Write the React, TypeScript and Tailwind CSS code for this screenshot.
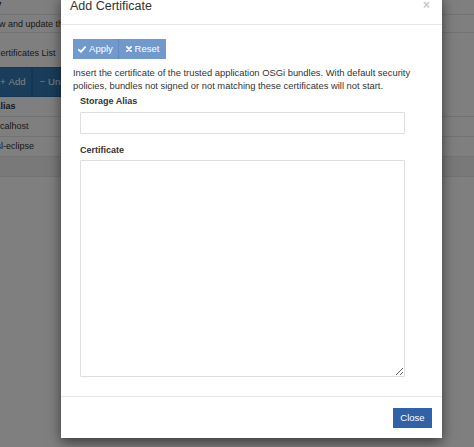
import React from 'react';

const font = "font-['Liberation_Sans',Arial,Helvetica,sans-serif]";

function CheckIcon() {
  return (
    <svg width="8" height="7" viewBox="0 0 14 12" className="shrink-0">
      <path d="M1.5 6.5 L5 10 L12.5 2" fill="none" stroke="white" strokeWidth="3.2" strokeLinecap="round" strokeLinejoin="round" />
    </svg>
  );
}

function XIcon() {
  return (
    <svg width="6" height="6" viewBox="0 0 10 10" className="shrink-0">
      <path d="M1.5 1.5 L8.5 8.5 M8.5 1.5 L1.5 8.5" fill="none" stroke="white" strokeWidth="2.8" strokeLinecap="round" />
    </svg>
  );
}

// page that sits behind the dialog
function BackgroundPage() {
  return (
    <div className="flex flex-col text-[#333]">
      <div className="h-[15px] border-b border-[#e6e6e6] whitespace-nowrap">
        <span className="block -ml-[40px] -mt-[2px] text-[10.5px] leading-[12px] font-bold">Security</span>
      </div>
      <div className="h-[18px] border-b border-[#e6e6e6] whitespace-nowrap flex items-center">
        <span className="-ml-[24px] text-[9px] leading-[10px]">Review and update the trusted certificates</span>
      </div>
      <div className="h-[34px] flex items-center whitespace-nowrap pt-[6px]">
        <span className="-ml-[6px] text-[9px] leading-[10px]">Certificates List</span>
      </div>
      <div className="h-[30px] flex items-stretch whitespace-nowrap text-white text-[9.5px]">
        <div className="-ml-[9px] flex items-center gap-[3px] bg-[#337ab7] border border-[#2e6da4] pl-[8px] pr-[6px]">
          <span>+</span>
          <span>Add</span>
        </div>
        <div className="flex items-center gap-[3px] bg-[#337ab7] border border-[#2e6da4] px-[6px]">
          <span>−</span>
          <span>Uninstall</span>
        </div>
      </div>
      <div className="h-[20px] border-b border-[#e6e6e6] flex items-center whitespace-nowrap">
        <span className="-ml-[6px] text-[9px] font-bold">Alias</span>
      </div>
      <div className="h-[20px] border-b border-[#e6e6e6] flex items-center whitespace-nowrap">
        <span className="-ml-[7px] text-[9px]">localhost</span>
      </div>
      <div className="h-[20px] border-b border-[#e6e6e6] flex items-center whitespace-nowrap">
        <span className="-ml-[8px] text-[9px]">ssl-eclipse</span>
      </div>
      <div className="h-[20px] border-b border-[#e6e6e6] bg-[#f2f2f2]" />
    </div>
  );
}

export default function App() {
  return (
    <div className={`relative w-[474px] h-[447px] overflow-hidden bg-white ${font}`}>
      <BackgroundPage />

      {/* backdrop */}
      <div className="absolute inset-0 bg-black/50" />

      {/* dialog */}
      <div className="absolute left-[61px] top-[-4px] w-[381px] h-[442px] bg-white flex flex-col shadow-[0_4px_12px_rgba(0,0,0,0.55)]">
        <div className="h-[29px] shrink-0 border-b border-[#e5e5e5] flex justify-between pl-[9px] pr-[12px] pt-[4px]">
          <span className="text-[12.5px] leading-[13px] text-[#333]">Add Certificate</span>
          <span className="text-[12px] leading-[10px] font-bold text-[#c8c8c8]">×</span>
        </div>

        <div className="flex-1 flex flex-col pl-[12px] pr-[12px] pt-[14px]">
          <div className="flex">
            <button className="h-[20px] w-[46px] flex items-center justify-center gap-[3px] bg-[#7099cd] text-white text-[9.5px] border-r border-[#6189bd]">
              <CheckIcon />
              <span>Apply</span>
            </button>
            <button className="h-[20px] w-[47px] flex items-center justify-center gap-[3px] bg-[#7099cd] text-white text-[9.5px]">
              <XIcon />
              <span>Reset</span>
            </button>
          </div>

          <p className="mt-[7px] text-[9.4px] leading-[13px] text-[#333]">
            Insert the certificate of the trusted application OSGi bundles. With default security policies, bundles not signed or not matching these certificates will not start.
          </p>

          <div className="ml-[7px] w-[325px] flex flex-col">
            <label className="mt-[3px] text-[9px] leading-[12px] font-bold text-[#333]">Storage Alias</label>
            <input className="mt-[5px] h-[22px] border border-[#dedede] rounded-[1px] outline-none" />
            <label className="mt-[10px] text-[9px] leading-[12px] font-bold text-[#333]">Certificate</label>
            <textarea className="mt-[4px] h-[217px] border border-[#dedede] rounded-[1px] outline-none" />
          </div>
        </div>

        <div className="h-[42px] shrink-0 border-t border-[#e5e5e5] flex justify-end items-start pt-[11px] pr-[10px]">
          <button className="h-[20px] w-[39px] bg-[#2f62a7] text-white text-[9.5px] flex items-center justify-center">
            Close
          </button>
        </div>
      </div>
    </div>
  );
}
